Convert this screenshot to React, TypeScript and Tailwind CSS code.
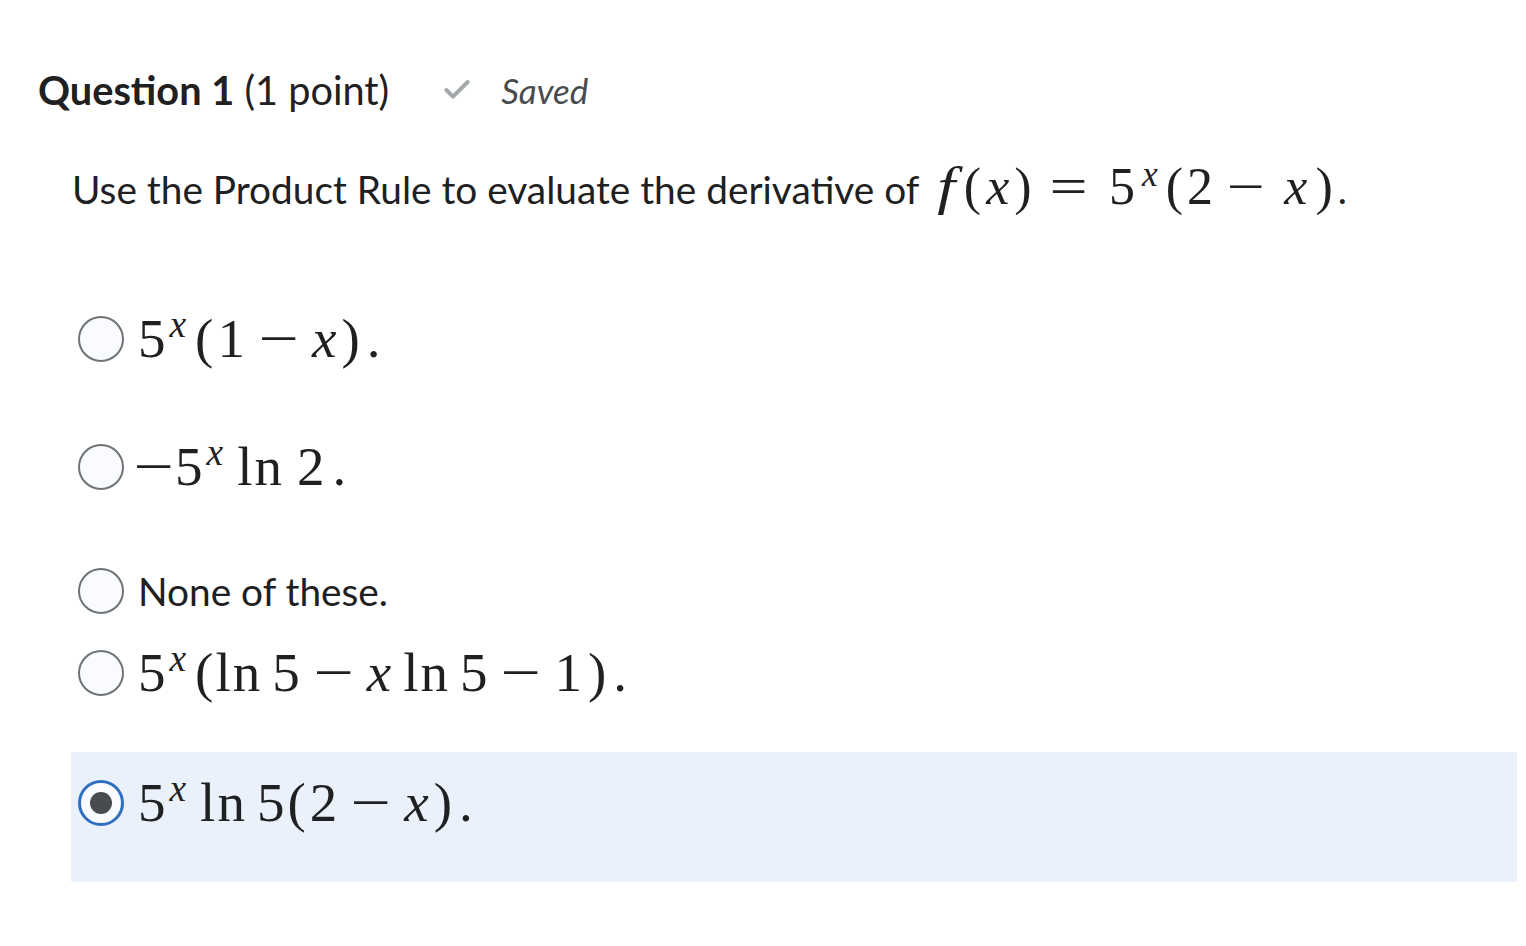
import { Check } from 'lucide-react';

const mathFont = "font-['Liberation_Serif','DejaVu_Serif',serif]";

function X({ className = 'mx-[3px]' }: { className?: string }) {
  return <span className={`italic ${className}`}>x</span>;
}

function Pow({ gap = 'ml-[4px]' }: { gap?: string }) {
  return (
    <>
      5<sup className={`relative -top-[0.52em] text-[0.68em] italic ${gap}`}>x</sup>
    </>
  );
}

function Minus({ className = 'mx-[18px]' }: { className?: string }) {
  return <span className={`inline-block scale-x-[1.3] ${className}`}>−</span>;
}

function Radio({ checked }: { checked?: boolean }) {
  if (checked) {
    return (
      <span className="flex h-[46px] w-[46px] shrink-0 items-center justify-center rounded-full border-[3px] border-[#2f6fbf] bg-[#f9fbff]">
        <span className="h-[22px] w-[22px] rounded-full bg-[#494c4e]" />
      </span>
    );
  }
  return <span className="h-[46px] w-[46px] shrink-0 rounded-full border-2 border-[#6e7376] bg-[#f9fbff]" />;
}

function Option({ checked, children, className = '' }: { checked?: boolean; children: React.ReactNode; className?: string }) {
  return (
    <label className={`flex h-[60px] items-center gap-[14px] pl-[7px] ${className}`}>
      <Radio checked={checked} />
      {children}
    </label>
  );
}

export default function App() {
  return (
    <div className="min-h-screen bg-white pt-[60px] pr-[9px] text-[#1f2021] font-['Lato','Noto_Sans',sans-serif]">
      {/* Header */}
      <div className="flex h-[60px] items-center pl-[38px]">
        <h2 className="text-[39.7px] leading-none">
          <span className="font-bold">Question 1</span> <span>(1 point)</span>
        </h2>
        <Check className="ml-[52px] h-[32px] w-[32px] text-[#a3a8ab]" strokeWidth={3} />
        <span className="ml-[28px] text-[35px] italic text-[#494c4e]">Saved</span>
      </div>

      {/* Prompt */}
      <div className="mt-[37px] flex h-[60px] items-center pl-[72px]">
        <p className="text-[38.8px] whitespace-nowrap">
          Use the Product Rule to evaluate the derivative of
          <span className={`${mathFont} ml-[14px] text-[52px]`}>
            <span className="ml-[6px] mr-[10px] inline-block scale-x-[1.25] italic">f</span>
            <span className="mr-[5px]">(</span>
            <X className="mr-[5px]" />)
            <span className="ml-[22px] mr-[26px] inline-block scale-x-[1.3]">=</span>
            <Pow gap="ml-[7px]" />
            <span className="ml-[8px] mr-[4px]">(</span>2<Minus className="ml-[18px] mr-[24px]" />
            <X className="mr-[8px]" />)
          </span>
          <span className="ml-[5px]">.</span>
        </p>
      </div>

      {/* Options */}
      <div className="pl-[71px]">
        <Option className="mt-[92px]">
          <span className={`${mathFont} text-[55px] whitespace-nowrap`}>
            <Pow />
            <span className="ml-[9px] mr-[4px]">(</span>1<Minus />
            <X className="mr-[5px]" />
            <span className="mr-[7px]">)</span>.
          </span>
        </Option>

        <Option className="mt-[68px]">
          <span className={`${mathFont} text-[55px] whitespace-nowrap`}>
            <span className="mr-[6px] inline-block scale-x-[1.3]">−</span>
            <Pow />
            <span className="ml-[14px] tracking-[2px]">ln</span>
            <span className="ml-[13px]">2</span>
            <span className="ml-[8px]">.</span>
          </span>
        </Option>

        <Option className="mt-[64px]">
          <span className="text-[38.8px]">None of these.</span>
        </Option>

        <Option className="mt-[22px]">
          <span className={`${mathFont} text-[55px] whitespace-nowrap`}>
            <Pow />
            <span className="ml-[9px] mr-[2px]">(</span>
            <span className="tracking-[2px]">ln</span>
            <span className="ml-[10px]">5</span>
            <Minus />
            <X className="mr-[2px]" />
            <span className="ml-[10px] tracking-[2px]">ln</span>
            <span className="ml-[10px]">5</span>
            <Minus />1
            <span className="ml-[6px] mr-[7px]">)</span>.
          </span>
        </Option>

        <div className="mt-[49px] h-[130px] bg-[#eaf1fb] pt-[21px]">
          <Option checked>
            <span className={`${mathFont} text-[55px] whitespace-nowrap`}>
              <Pow />
              <span className="ml-[14px] tracking-[2px]">ln</span>
              <span className="ml-[10px]">5</span>
              <span className="ml-[3px] mr-[4px]">(</span>2<Minus />
              <X className="mr-[5px]" />
              <span className="mr-[7px]">)</span>.
            </span>
          </Option>
        </div>
      </div>
    </div>
  );
}
